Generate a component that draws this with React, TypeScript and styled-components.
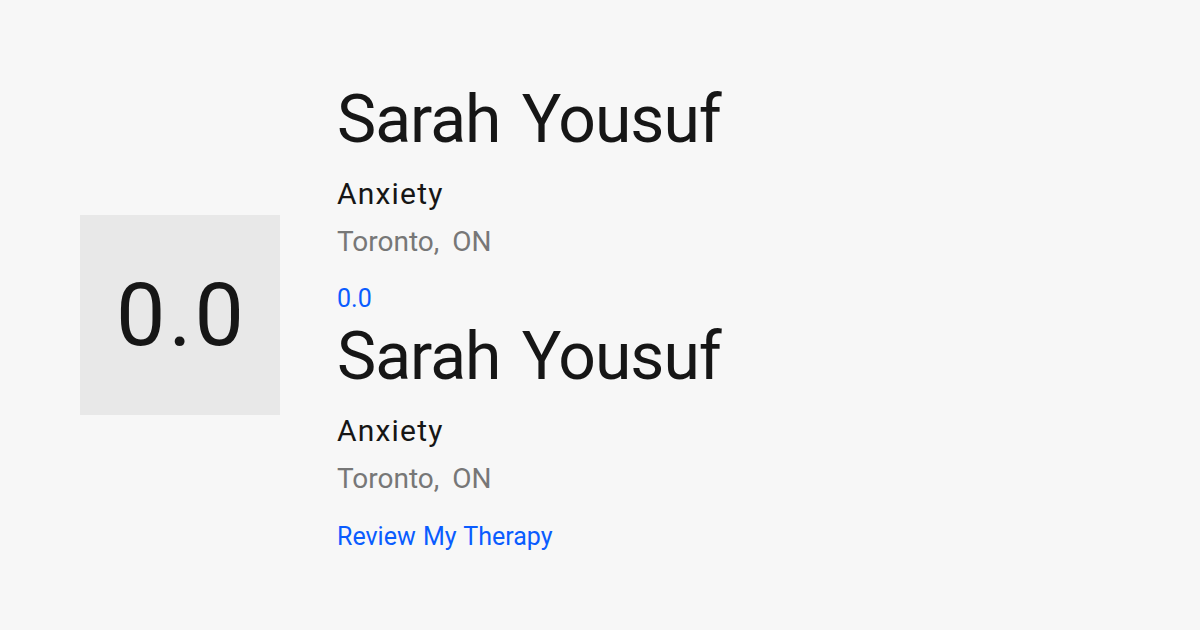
import React from 'react'
import styled, { createGlobalStyle } from 'styled-components'

const GlobalStyle = createGlobalStyle`
  html, body {
    margin: 0;
    padding: 0;
    background: #f7f7f7;
    font-family: Roboto, "Liberation Sans", sans-serif;
    color: #161616;
  }
`

const Page = styled.div`
  width: 1200px;
  height: 630px;
  display: flex;
  align-items: center;
  padding-left: 80px;
  box-sizing: border-box;
  gap: 57px;
`

const ScoreBox = styled.div`
  width: 200px;
  height: 200px;
  flex-shrink: 0;
  background: #e8e8e8;
  display: flex;
  align-items: center;
  justify-content: center;
  font-size: 88px;
  line-height: 1;
  letter-spacing: 3px;
  text-indent: 3px;
`

const Details = styled.div`
  display: flex;
  flex-direction: column;
  margin-top: 6px;
`

const Profile = styled.div`
  display: flex;
  flex-direction: column;
  align-items: flex-start;
`

const Name = styled.div<{ $gap?: number }>`
  font-size: 66px;
  line-height: 72px;
  letter-spacing: -1px;
  word-spacing: 6px;
  margin-top: ${p => p.$gap || 0}px;
`

const Specialty = styled.div`
  font-size: 30px;
  line-height: 36px;
  margin-top: 20px;
  letter-spacing: 1.2px;
`

const Location = styled.div`
  font-size: 28px;
  line-height: 34px;
  color: #777;
  margin-top: 13px;
  word-spacing: 6px;
`

const BlueText = styled.a<{ $gap: number }>`
  font-size: 25px;
  line-height: 31px;
  margin-top: ${p => p.$gap}px;
  color: #0a5cff;
  text-decoration: none;
  word-spacing: 1px;
`

const App = () => (
  <>
    <GlobalStyle />
    <Page>
      <ScoreBox>0.0</ScoreBox>
      <Details>
        <Profile>
          <Name>Sarah Yousuf</Name>
          <Specialty>Anxiety</Specialty>
          <Location>Toronto, ON</Location>
          <BlueText $gap={24}>0.0</BlueText>
        </Profile>
        <Profile>
          <Name $gap={7}>Sarah Yousuf</Name>
          <Specialty>Anxiety</Specialty>
          <Location>Toronto, ON</Location>
          <BlueText href="#" $gap={25}>Review My Therapy</BlueText>
        </Profile>
      </Details>
    </Page>
  </>
)

export default App
